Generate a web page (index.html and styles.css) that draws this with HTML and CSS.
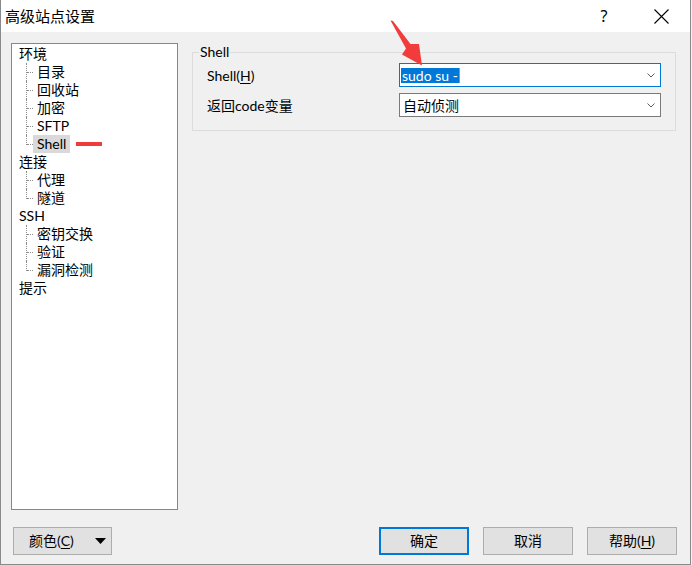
FILE: index.html
```html
<!DOCTYPE html>
<html lang="zh-CN">
<head>
<meta charset="utf-8">
<title>高级站点设置</title>
<link rel="stylesheet" href="styles.css">
</head>
<body>
<div class="window">
  <div class="titlebar">
    <span class="title">高级站点设置</span>
    <span class="tb-btn help">?</span>
    <span class="tb-btn close">
      <svg width="15" height="15" viewBox="0 0 15 15"><path d="M0.5 0.5 L14.5 14.5 M14.5 0.5 L0.5 14.5" stroke="#000" stroke-width="1.1" fill="none"/></svg>
    </span>
  </div>
  <div class="body">
    <div class="main">
      <div class="tree">
        <ul class="roots">
          <li class="root"><span class="node">环境</span>
            <ul class="children">
              <li class="child"><span class="node">目录</span></li>
              <li class="child"><span class="node">回收站</span></li>
              <li class="child"><span class="node">加密</span></li>
              <li class="child"><span class="node">SFTP</span></li>
              <li class="child"><span class="node selected">Shell</span><span class="mark"></span></li>
            </ul>
          </li>
          <li class="root"><span class="node">连接</span>
            <ul class="children">
              <li class="child"><span class="node">代理</span></li>
              <li class="child"><span class="node">隧道</span></li>
            </ul>
          </li>
          <li class="root"><span class="node">SSH</span>
            <ul class="children">
              <li class="child"><span class="node">密钥交换</span></li>
              <li class="child"><span class="node">验证</span></li>
              <li class="child"><span class="node">漏洞检测</span></li>
            </ul>
          </li>
          <li class="root"><span class="node">提示</span></li>
        </ul>
      </div>
      <div class="panel">
        <div class="group">
          <span class="legend">Shell</span>
          <div class="row">
            <span class="label">Shell(<u>H</u>)</span>
            <div class="combo focused">
              <span class="value"><span class="sel">sudo su -</span></span>
              <svg class="chev" width="8" height="5" viewBox="0 0 8 5"><path d="M0.5 0.5 L4 4 L7.5 0.5" stroke="#5f5f5f" stroke-width="1" fill="none"/></svg>
            </div>
          </div>
          <div class="row">
            <span class="label">返回code变量</span>
            <div class="combo">
              <span class="value"><span class="plain">自动侦测</span></span>
              <svg class="chev" width="8" height="5" viewBox="0 0 8 5"><path d="M0.5 0.5 L4 4 L7.5 0.5" stroke="#5f5f5f" stroke-width="1" fill="none"/></svg>
            </div>
          </div>
        </div>
      </div>
    </div>
    <div class="footer">
      <button class="btn color-btn"><span>颜色(<u>C</u>)</span>
        <svg class="tri" width="11" height="6" viewBox="0 0 11 6"><path d="M0 0 L11 0 L5.5 6 Z" fill="#000"/></svg>
      </button>
      <div class="actions">
        <button class="btn default">确定</button>
        <button class="btn">取消</button>
        <button class="btn">帮助(<u>H</u>)</button>
      </div>
    </div>
  </div>
  <svg class="arrow" width="50" height="55" viewBox="380 15 50 55">
    <polygon points="390.5,20.5 393,21 410.5,44 419,44 422,65.5 402,54.5 406,48.5" fill="#f23b3b"/>
  </svg>
</div>
</body>
</html>
```
FILE: styles.css
```css
* { box-sizing: border-box; }
html, body { margin: 0; padding: 0; background: #f0f0f0; }
body {
  font-family: Lato, "Noto Sans CJK SC", sans-serif;
  font-size: 14px;
  color: #000;
}
ul { list-style: none; margin: 0; padding: 0; }
u { text-decoration: underline; text-underline-offset: 2px; }

.window {
  position: relative;
  width: 691px;
  height: 565px;
  background: #f0f0f0;
  border-left: 1px solid #8a8a8a;
  border-right: 1px solid #8a8a8a;
  border-bottom: 1px solid #8a8a8a;
}

.titlebar {
  height: 32px;
  background: #fff;
  display: flex;
  align-items: center;
  padding-left: 4px;
}
.title { font-size: 15px; line-height: 20px; }
.tb-btn {
  width: 46px;
  height: 32px;
  display: flex;
  align-items: center;
  justify-content: center;
}
.help {
  margin-left: auto;
  font-family: "Noto Sans", sans-serif;
  font-size: 16px;
}
.close { margin-left: 11px; margin-right: 6px; }

.body {
  padding: 11px 0 0 10px;
}
.main {
  display: flex;
  align-items: flex-start;
}
.tree {
  width: 167px;
  height: 467px;
  background: #fff;
  border: 1px solid #828790;
  padding: 1px 0 0 7px;
  line-height: 18px;
}
.root { line-height: 18px; }
.root > .node {
  display: block;
  height: 18px;
}
.node {
  height: 18px;
  line-height: 18px;
  white-space: nowrap;
}
.children { margin-left: 7px; }
.child {
  position: relative;
  padding-left: 7px;
  height: 18px;
  display: flex;
  align-items: center;
}
.child .node { padding: 0 4px; display: block; }
.child::before {
  content: "";
  position: absolute;
  left: 0;
  top: 0;
  height: 18px;
  border-left: 1px dotted #8c8c8c;
}
.child:last-child::before { height: 10px; }
.child::after {
  content: "";
  position: absolute;
  left: 1px;
  top: 9px;
  width: 6px;
  border-top: 1px dotted #8c8c8c;
}
.selected { background: #d9d9d9; }
.mark {
  display: block;
  width: 26px;
  height: 4px;
  background: #ee3b3b;
  margin-left: 6px;
}

.panel {
  margin-left: 14px;
  margin-top: 9px;
}
.group {
  position: relative;
  width: 484px;
  border: 1px solid #dcdcdc;
  padding: 10px 14px 13px 14px;
  display: flex;
  flex-direction: column;
  gap: 6px;
}
.legend {
  position: absolute;
  left: 6px;
  top: -10px;
  line-height: 18px;
  padding: 0 1px;
  background: #f0f0f0;
}
.row {
  display: flex;
  align-items: center;
  height: 24px;
}
.label { width: 192px; white-space: nowrap; }
.combo {
  width: 262px;
  height: 24px;
  background: #fff;
  border: 1px solid #7a7a7a;
  display: flex;
  align-items: center;
  justify-content: space-between;
  padding-left: 1px;
  padding-right: 5px;
}
.combo.focused { border-color: #0078d7; }
.value { display: flex; align-items: center; }
.sel {
  background: #0078d7;
  color: #fff;
  line-height: 15px;
  padding: 0 1px;
  border-right: 1px solid #e0803a;
}
.plain { padding: 0 2px; line-height: 15px; }
.chev { display: block; }

.footer {
  margin-top: 17px;
  display: flex;
  align-items: center;
}
.btn {
  font-family: inherit;
  font-size: 14px;
  color: #000;
  height: 28px;
  background: #e1e1e1;
  border: 1px solid #adadad;
  padding: 0;
  margin: 0;
  display: flex;
  align-items: center;
  justify-content: center;
  line-height: 18px;
}
.color-btn {
  width: 99px;
  margin-left: 2px;
  justify-content: flex-start;
  padding-left: 15px;
}
.color-btn .tri { margin-left: auto; margin-right: 5px; }
.actions {
  margin-left: auto;
  margin-right: 13px;
  display: flex;
  gap: 14px;
}
.actions .btn { width: 90px; }
.btn.default { border: 2px solid #0078d7; }

.arrow {
  position: absolute;
  left: 379px;
  top: 15px;
  pointer-events: none;
}
```
